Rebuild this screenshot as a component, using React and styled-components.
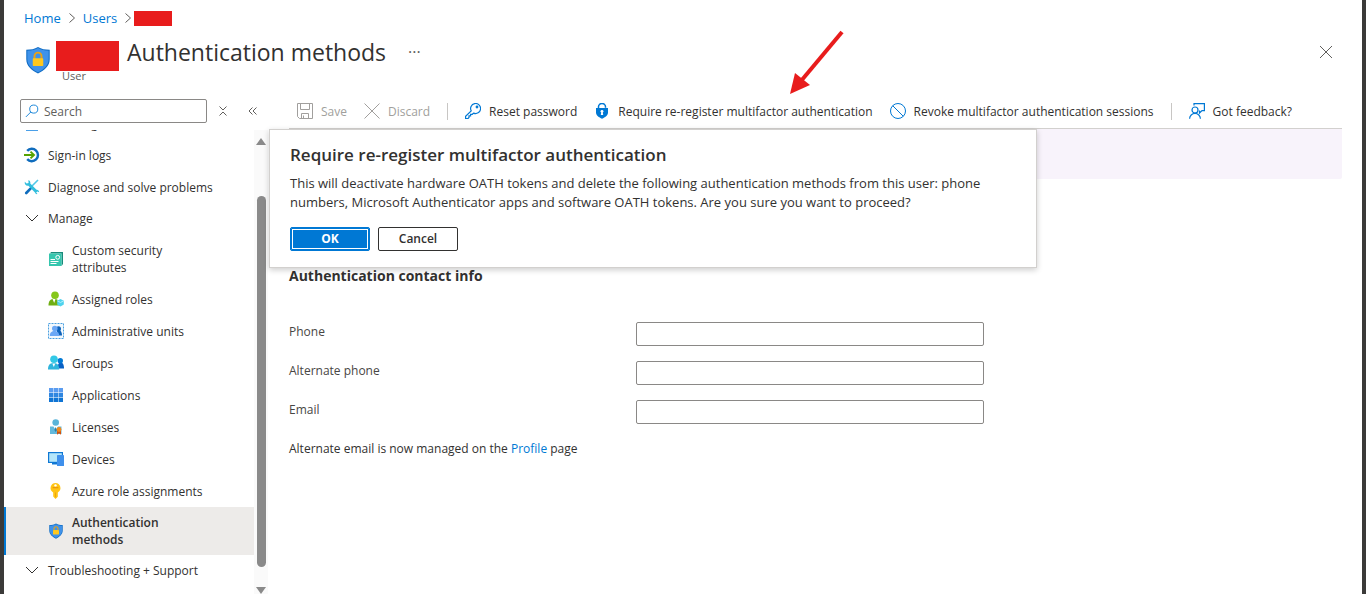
import React from "react";
import styled, { createGlobalStyle, css } from "styled-components";

const topItems = [
  { label: "Audit logs", icon: "book" },
  { label: "Sign-in logs", icon: "signin" },
  { label: "Diagnose and solve problems", icon: "tools" },
];

const manageItems = [
  { label: "Custom security attributes", icon: "attributes" },
  { label: "Assigned roles", icon: "roles" },
  { label: "Administrative units", icon: "units" },
  { label: "Groups", icon: "groups" },
  { label: "Applications", icon: "apps" },
  { label: "Licenses", icon: "licenses" },
  { label: "Devices", icon: "devices" },
  { label: "Azure role assignments", icon: "goldkey" },
  { label: "Authentication methods", icon: "shield", active: true },
];

const fields = [
  { id: "phone", label: "Phone" },
  { id: "alternate-phone", label: "Alternate phone" },
  { id: "email", label: "Email" },
];

const line = { fill: "none", stroke: "currentColor" };

const icons = {
  book: <path fill="#4a9fe8" d="M2 1h12v15H2z" />,
  signin: (
    <>
      <path
        d="M3.200 3.800A6.200 6.200 0 1 1 3.200 12.200"
        fill="none"
        stroke="#0f6cbd"
        strokeWidth="2.500"
      />
      <path
        d="M0 8h9.500M6.500 4.600 10 8l-3.500 3.400"
        fill="none"
        stroke="#57a300"
        strokeWidth="1.900"
      />
    </>
  ),
  tools: (
    <>
      <path d="M14 1 6.500 8.500" stroke="#50c7e8" strokeWidth="1.600" />
      <path
        d="M6.800 7.600 1.300 13a1.300 1.300 0 0 0 1.900 1.900l5.400-5.600z"
        fill="#0f6cbd"
      />
      <path
        d="M4.300 1.300 4.600 3.900 2.600 4.500.8 2.700C.2 5 1.800 7 4.400 6.700l6.800 7.100c.1 1 1.200 1.600 2.300 1.300l-1.300-1.600 1-1.100 1.900.8c0-1.700-1.200-2.600-2.600-2.400L6.300 4.500C6.600 2.800 5.800 1.500 4.300 1.300z"
        fill="#32bedd"
      />
    </>
  ),
  attributes: (
    <>
      <path d="M3 1h12v12l-1.500 2V2.500H2z" fill="#198a7b" />
      <path d="M1 2.500h12.500V15H1z" fill="#35c6ae" />
      <circle cx="9.700" cy="6.300" r="1.900" fill="none" stroke="#fff" />
      <path d="M2.500 8.500h4.500M2.500 10.500h8M2.500 12.500h6" stroke="#fff" />
    </>
  ),
  roles: (
    <>
      <path d="M.5 14.500C.5 10 2.500 7.800 6 7.800s6 2 6 6.700z" fill="#6fae12" />
      <path d="M4.500 8h3L6.200 12z" fill="#fff" />
      <circle cx="7" cy="4.200" r="3.800" fill="#86c71a" />
      <path d="m12.500 8 3.300 1.700v3.900l-3.300 1.900-3.300-1.900V9.700z" fill="#4fd3ee" />
      <path d="m9.200 9.700 3.300 1.800 3.300-1.800" fill="none" stroke="#b5f0fb" />
    </>
  ),
  units: (
    <>
      <path
        d="M.5.5h15v15H.5z"
        fill="#f2f8fd"
        stroke="#4aa0e0"
        strokeDasharray="2 1"
      />
      <path d="M9 6.500c3 0 5 2 5 6H9z" fill="#0d62ba" />
      <circle cx="10.500" cy="5.700" r="2.500" fill="#0d62ba" />
      <path d="M1.800 13c0-3.600 2-5 4.700-5s4.700 1.400 4.700 5z" fill="#6aa7f5" />
      <circle cx="6.800" cy="5.500" r="2.800" fill="#6aa7f5" />
    </>
  ),
  groups: (
    <>
      <path d="M10 13.500c-.5-4 .5-6 2.500-6s3.500 1.600 3.500 6z" fill="#0860c4" />
      <circle cx="12.300" cy="5.700" r="2.700" fill="#0078d4" />
      <path d="M0 14.500C0 10 2 8 5.600 8s5.600 2 5.600 6.500z" fill="#2fb4dc" />
      <path d="M4.300 8.400h3L5.800 12z" fill="#fff" />
      <circle cx="6" cy="4.300" r="3.800" fill="#32c8e6" />
    </>
  ),
  apps: (
    <>
      <path d="M1 1h4.400v4.400H1zM5.900 1h4.400v4.400H5.900zM10.800 1h4.200v4.400h-4.200z" fill="#5a9cf0" />
      <path d="M1 5.900h4.400v4.400H1zM5.900 5.900h4.400v4.400H5.900zM10.800 5.900h4.200v4.400h-4.200z" fill="#2f86e0" />
      <path d="M1 10.800h4.400V15H1zM5.900 10.800h4.400V15H5.900zM10.800 10.800h4.200V15h-4.200z" fill="#0f74d4" />
    </>
  ),
  licenses: (
    <>
      <path d="M2 7.500h3.500L7.700 11l2.300-3.500h3.500V15H2z" fill="#64b9dc" />
      <path d="m7.700 8 1.300 3-1.300 2-1.300-2z" fill="#2d7fa8" />
      <circle cx="7.700" cy="3.500" r="3.300" fill="#5ab4d9" />
      <path d="M9 11h4v4.800l-2-1.500-2 1.500z" fill="#d4520d" />
      <circle cx="11" cy="10.500" r="2.400" fill="#f08a1d" />
    </>
  ),
  devices: (
    <>
      <path d="M0 1h15v11H0z" fill="#0f78d4" />
      <path d="M1.200 2.200h12.600v8.600H1.200z" fill="#b4e6fa" />
      <path d="M4 12h5v1.500H4z" fill="#0f78d4" />
      <rect x="9" y="4" width="7" height="11" rx=".6" fill="#3f90ec" />
    </>
  ),
  goldkey: (
    <>
      <path
        d="M7.500 0a5 5 0 0 1 2.300 9.400v4.300L7.500 16l-2.300-2.600v-4A5 5 0 0 1 7.500 0z"
        fill="#ffc414"
      />
      <circle cx="7.500" cy="2.400" r="1.200" fill="#fff" />
      <path d="M4.600 4.700h5.800" stroke="#e8930c" strokeWidth="1.100" />
      <path d="M7.500 9.500v4.800" stroke="#e8a00c" strokeWidth=".8" />
    </>
  ),
  shield: (
    <>
      <path
        d="M8 .5c2 1.300 4 1.500 6.700 1.600v5.400c0 4-3.200 6.300-6.700 8.200-3.500-1.900-6.700-4.200-6.700-8.200V2.100C4 2 6 1.800 8 .5z"
        fill="#0f6cc4"
      />
      <path
        d="M8 1.200c1.900 1.100 3.800 1.400 6.100 1.500v4.800c0 3.600-2.800 5.700-6.100 7.500-3.300-1.800-6.100-3.900-6.100-7.500V2.700C4.200 2.600 6.100 2.300 8 1.200z"
        fill="#3f92ea"
      />
      <path
        d="M6 7.500V5.800a2 2 0 0 1 4 0v1.700"
        fill="none"
        stroke="#eba313"
        strokeWidth="1.100"
      />
      <rect x="5" y="7" width="6" height="4.400" rx=".4" fill="#ffc81e" />
    </>
  ),
  search: (
    <g {...line}>
      <circle cx="10" cy="5.800" r="4.600" />
      <path d="M6.700 9.100 1 14.800" />
    </g>
  ),
  save: (
    <g {...line}>
      <path d="M.5.5h15v15h-13l-2-2z" />
      <path d="M3.500.5v6h9v-6M4.500 15.500v-5h7v5M6.500 12.500v3" />
    </g>
  ),
  discard: <path {...line} d="m.5.5 15 15M15.500.5l-15 15" />,
  key: (
    <g {...line} strokeWidth="1.200">
      <path d="M6.200 7.900a5 5 0 1 1 2.400 2.200L7.300 11.300H5.600v1.600H4v1.600l-1 1H.6v-2.200z" />
      <circle cx="12" cy="4" r=".8" />
    </g>
  ),
  lock: (
    <>
      <path
        d="M4.500 5.500V3.800a3.500 3.300 0 0 1 7 0v1"
        fill="none"
        stroke="currentColor"
        strokeWidth="1.500"
      />
      <path
        d="M2 5h12v4.500c0 3-3 4.800-6 6.300-3-1.500-6-3.300-6-6.300z"
        fill="currentColor"
      />
      <circle cx="8" cy="8.300" r="1.400" fill="#fff" />
      <path d="M7.300 9h1.400l.5 3H6.800z" fill="#fff" />
    </>
  ),
  block: (
    <g {...line}>
      <circle cx="8" cy="8" r="7.500" />
      <path d="m2.700 2.700 10.600 10.600" />
    </g>
  ),
  feedback: (
    <g {...line} strokeWidth="1.200">
      <path d="M5 2.500V.6h10.400v7H13L10.500 10V7.600" />
      <circle cx="6" cy="7" r="3" />
      <path d="M.6 15.800a5.400 5.400 0 0 1 10.800 0" />
    </g>
  ),
  chevronDown: <path {...line} d="m2 5 6 6 6-6" />,
  chevronRight: <path {...line} d="m5.500 3.500 5 4.500-5 4.500" />,
  collapse: <path {...line} d="m7.500 4.500-3.500 3.500 3.500 3.500M11.500 4.500 8 8l3.500 3.500" />,
  clear: <path {...line} d="M4.500 3.500 8 7l3.500-3.500M4.500 12.500 8 9l3.500 3.500" />,
  close: <path {...line} d="m2 2 12 12M14 2 2 14" />,
};

function Icon({ name, size = 16, color }) {
  return (
    <Svg viewBox="0 0 16 16" $size={size} $color={color} aria-hidden="true">
      {icons[name]}
    </Svg>
  );
}

function NavItem({ item, nested }) {
  return (
    <li>
      <NavLink href="#" $nested={nested} $active={item.active}>
        <Icon name={item.icon} />
        <span>{item.label}</span>
      </NavLink>
    </li>
  );
}

function NavGroup({ label }) {
  return (
    <NavToggle type="button">
      <Icon name="chevronDown" color="#323130" />
      {label}
    </NavToggle>
  );
}

function Command({ icon, label, disabled }) {
  return (
    <CommandButton type="button" disabled={disabled}>
      <Icon name={icon} color={disabled ? "#a19f9d" : "#0078d4"} />
      {label}
    </CommandButton>
  );
}

export default function App() {
  return (
    <Page>
      <GlobalStyle />
      <Breadcrumb aria-label="Breadcrumb">
        <Link href="#">Home</Link>
        <Icon name="chevronRight" color="#605e5c" />
        <Link href="#">Users</Link>
        <Icon name="chevronRight" color="#605e5c" />
        <Redacted $width={38} $height={15} />
      </Breadcrumb>
      <Header>
        <Icon name="shield" size={28} />
        <Heading>
          <TitleRow>
            <Redacted $width={63} $height={30} />
            <Title>Authentication methods</Title>
            <MoreButton type="button" aria-label="More">
              ···
            </MoreButton>
          </TitleRow>
          <Subtitle>User</Subtitle>
        </Heading>
        <IconButton type="button" aria-label="Close">
          <Icon name="close" />
        </IconButton>
      </Header>
      <Body>
        <Sidebar>
          <SearchRow>
            <SearchBox>
              <Icon name="search" size={14} color="#0078d4" />
              <SearchInput type="text" placeholder="Search" aria-label="Search" />
            </SearchBox>
            <IconButton type="button" aria-label="Expand all">
              <Icon name="clear" />
            </IconButton>
            <IconButton type="button" aria-label="Collapse menu">
              <Icon name="collapse" />
            </IconButton>
          </SearchRow>
          <NavArea>
            <Nav>
              <NavList $scrolled>
                {topItems.map((item) => (
                  <NavItem key={item.label} item={item} />
                ))}
              </NavList>
              <NavGroup label="Manage" />
              <NavList>
                {manageItems.map((item) => (
                  <NavItem key={item.label} item={item} nested />
                ))}
              </NavList>
              <NavGroup label="Troubleshooting + Support" />
            </Nav>
            <Scrollbar>
              <ScrollArrow />
              <Track $grow={51} />
              <Thumb />
              <Track $grow={20} />
              <ScrollArrow $down />
            </Scrollbar>
          </NavArea>
        </Sidebar>
        <Main>
          <Toolbar>
            <Command icon="save" label="Save" disabled />
            <Command icon="discard" label="Discard" disabled />
            <Separator />
            <Command icon="key" label="Reset password" />
            <Command
              icon="lock"
              label="Require re-register multifactor authentication"
            />
            <Command
              icon="block"
              label="Revoke multifactor authentication sessions"
            />
            <Separator />
            <Command icon="feedback" label="Got feedback?" />
          </Toolbar>
          <Banner />
          <SectionTitle>Authentication contact info</SectionTitle>
          <Form>
            {fields.map((field) => (
              <Field key={field.id}>
                <FieldLabel htmlFor={field.id}>{field.label}</FieldLabel>
                <TextInput id={field.id} type="text" />
              </Field>
            ))}
          </Form>
          <Note>
            Alternate email is now managed on the <Link href="#">Profile</Link>{" "}
            page
          </Note>
          <Dialog role="dialog" aria-labelledby="dialog-title">
            <DialogTitle id="dialog-title">
              Require re-register multifactor authentication
            </DialogTitle>
            <DialogText>
              This will deactivate hardware OATH tokens and delete the following
              authentication methods from this user: phone numbers, Microsoft
              Authenticator apps and software OATH tokens. Are you sure you want
              to proceed?
            </DialogText>
            <DialogActions>
              <DialogButton type="button" $primary>
                OK
              </DialogButton>
              <DialogButton type="button">Cancel</DialogButton>
            </DialogActions>
          </Dialog>
          <Arrow viewBox="0 0 56 66" aria-hidden="true">
            <path d="M53 2 12 51" stroke="#e81c1c" strokeWidth="4" />
            <path d="M1 64 6 43l15 12z" fill="#e81c1c" />
          </Arrow>
        </Main>
      </Body>
    </Page>
  );
}

const GlobalStyle = createGlobalStyle`
  * {
    box-sizing: border-box;
  }

  body {
    margin: 0;
    background: #fff;
    color: #323130;
    font-family: "Segoe UI", "Open Sans", sans-serif;
    font-size: 12px;
    line-height: 17px;
  }

  button,
  input {
    font: inherit;
    color: inherit;
  }

  button {
    padding: 0;
    border: 0;
    background: none;
  }
`;

const Svg = styled.svg`
  display: block;
  flex: none;
  width: ${(props) => props.$size}px;
  height: ${(props) => props.$size}px;
  color: ${(props) => props.$color || "#605e5c"};
`;

const Page = styled.div`
  display: flex;
  flex-direction: column;
  min-height: 100vh;
  border: solid #3b3a39;
  border-width: 0 4px;
`;

const Link = styled.a`
  color: #0078d4;
  text-decoration: none;
`;

const Redacted = styled.span`
  position: relative;
  flex: none;
  width: ${(props) => props.$width}px;
  height: ${(props) => props.$height}px;
  background: #e81c1c;
`;

const Breadcrumb = styled.nav`
  display: flex;
  align-items: center;
  gap: 3px;
  height: 36px;
  padding-left: 20px;
  font-size: 13px;

  & > ${Redacted} {
    margin-left: -5px;
  }
`;

const Header = styled.header`
  display: flex;
  align-items: flex-start;
  height: 58px;
  padding: 0 28px 0 20px;

  & > svg {
    margin-top: 10px;
  }

  & > button {
    margin-top: 8px;
  }
`;

const Heading = styled.div`
  flex: 1;
  padding-left: 4px;
`;

const TitleRow = styled.div`
  display: flex;
  align-items: center;
  height: 32px;

  & > ${Redacted} {
    align-self: flex-start;
    margin-top: 5px;
  }
`;

const Title = styled.h1`
  margin: 0 22px 0 8px;
  font-size: 23px;
  font-weight: 400;
  line-height: 32px;
`;

const MoreButton = styled.button`
  font-size: 16px;
  color: #605e5c;
`;

const Subtitle = styled.div`
  padding-left: 6px;
  font-size: 11px;
  line-height: 16px;
  color: #605e5c;
`;

const IconButton = styled.button`
  flex: none;
`;

const Body = styled.div`
  display: flex;
  flex: 1;
`;

const Sidebar = styled.aside`
  display: flex;
  flex: none;
  flex-direction: column;
  width: 264px;
`;

const SearchRow = styled.div`
  display: flex;
  align-items: center;
  gap: 14px;
  height: 36px;
  padding: 0 7px 2px 16px;
`;

const SearchBox = styled.div`
  display: flex;
  flex: 1;
  align-items: center;
  gap: 5px;
  height: 24px;
  margin-right: -6px;
  padding-left: 4px;
  border: 1px solid #8a8886;
  border-radius: 2px;
`;

const SearchInput = styled.input`
  flex: 1;
  min-width: 0;
  padding: 0;
  border: 0;
  outline: 0;

  &::placeholder {
    color: #605e5c;
    opacity: 1;
  }
`;

const NavArea = styled.div`
  display: flex;
  flex: 1;
  overflow: hidden;
`;

const Nav = styled.nav`
  flex: 1;
  min-width: 0;
`;

const NavList = styled.ul`
  margin: ${(props) => (props.$scrolled ? "-23px" : 0)} 0 0;
  padding: 0;
  list-style: none;
`;

const navRow = css`
  display: flex;
  align-items: center;
  gap: 8px;
  width: 100%;
  min-height: 32px;
  color: #323130;
  text-align: left;
`;

const NavLink = styled.a`
  ${navRow}
  padding: 7px 20px;
  text-decoration: none;

  ${(props) =>
    props.$nested &&
    css`
      padding-left: 44px;
      padding-right: 44px;
    `}

  ${(props) =>
    props.$active &&
    css`
      background: #edebe9;
      box-shadow: inset 2px 0 #0078d4;
      font-weight: 600;
    `}
`;

const NavToggle = styled.button`
  ${navRow}
  padding: 6px 20px 8px;
`;

const Scrollbar = styled.div`
  display: flex;
  flex: none;
  flex-direction: column;
  align-items: center;
  width: 14px;
  padding-top: 8px;
  background: #fafafa;
`;

const ScrollArrow = styled.span`
  border: solid transparent;
  border-width: 0 5px;
  ${(props) => (props.$down ? "border-top" : "border-bottom")}: 7px solid #8a8a8a;
`;

const Track = styled.span`
  flex: ${(props) => props.$grow};
`;

const Thumb = styled.span`
  flex: 370;
  width: 9px;
  border-radius: 5px;
  background: #8a8a8a;
`;

const Main = styled.main`
  position: relative;
  flex: 1;
  min-width: 0;
  padding: 0 20px 0 21px;
`;

const Toolbar = styled.div`
  display: flex;
  align-items: center;
  gap: 17px;
  height: 35px;
  padding-left: 8px;
  border-bottom: 1px solid #d2d0ce;
`;

const CommandButton = styled.button`
  display: flex;
  align-items: center;
  gap: 8px;
  white-space: nowrap;

  &:disabled {
    color: #a19f9d;
  }
`;

const Separator = styled.span`
  width: 1px;
  height: 17px;
  background: #c8c6c4;
`;

const Banner = styled.div`
  height: 50px;
  border-radius: 0 0 2px 2px;
  background: #f8f3fb;
`;

const SectionTitle = styled.h2`
  margin: 87px 0 0;
  font-size: 14px;
  font-weight: 700;
  line-height: 20px;
`;

const Form = styled.form`
  display: grid;
  gap: 15px;
  margin-top: 36px;
`;

const Field = styled.div`
  display: grid;
  grid-template-columns: 33% 33%;
`;

const FieldLabel = styled.label`
  padding-top: 1px;
  color: #484644;
`;

const TextInput = styled.input`
  height: 24px;
  padding: 0 8px;
  border: 1px solid #8a8886;
  border-radius: 2px;
`;

const Note = styled.p`
  margin: 16px 0 0;
`;

const Dialog = styled.section`
  position: absolute;
  top: 35px;
  left: 1px;
  width: 768px;
  padding: 15px 20px 16px;
  border: 1px solid #d2d0ce;
  background: #fff;
  box-shadow: 0 2px 6px rgba(0, 0, 0, 0.2);
`;

const DialogTitle = styled.h2`
  margin: 0;
  font-size: 17px;
  font-weight: 600;
  line-height: 20px;
`;

const DialogText = styled.p`
  margin: 9px 0 15px;
  font-size: 13px;
  line-height: 19px;
`;

const DialogActions = styled.div`
  display: flex;
  gap: 8px;
`;

const DialogButton = styled.button`
  width: 80px;
  height: 24px;
  padding-bottom: 2px;
  border: 1px solid #323130;
  border-radius: 2px;
  font-weight: 600;

  ${(props) =>
    props.$primary &&
    css`
      border-color: #0078d4;
      background: #0078d4;
      box-shadow: inset 0 0 0 1px #0078d4, inset 0 0 0 2px #fff;
      color: #fff;
      font-weight: 700;
    `}
`;

const Arrow = styled.svg`
  position: absolute;
  top: -64px;
  left: 521px;
  width: 56px;
  height: 66px;
  fill: none;
  pointer-events: none;
`;
